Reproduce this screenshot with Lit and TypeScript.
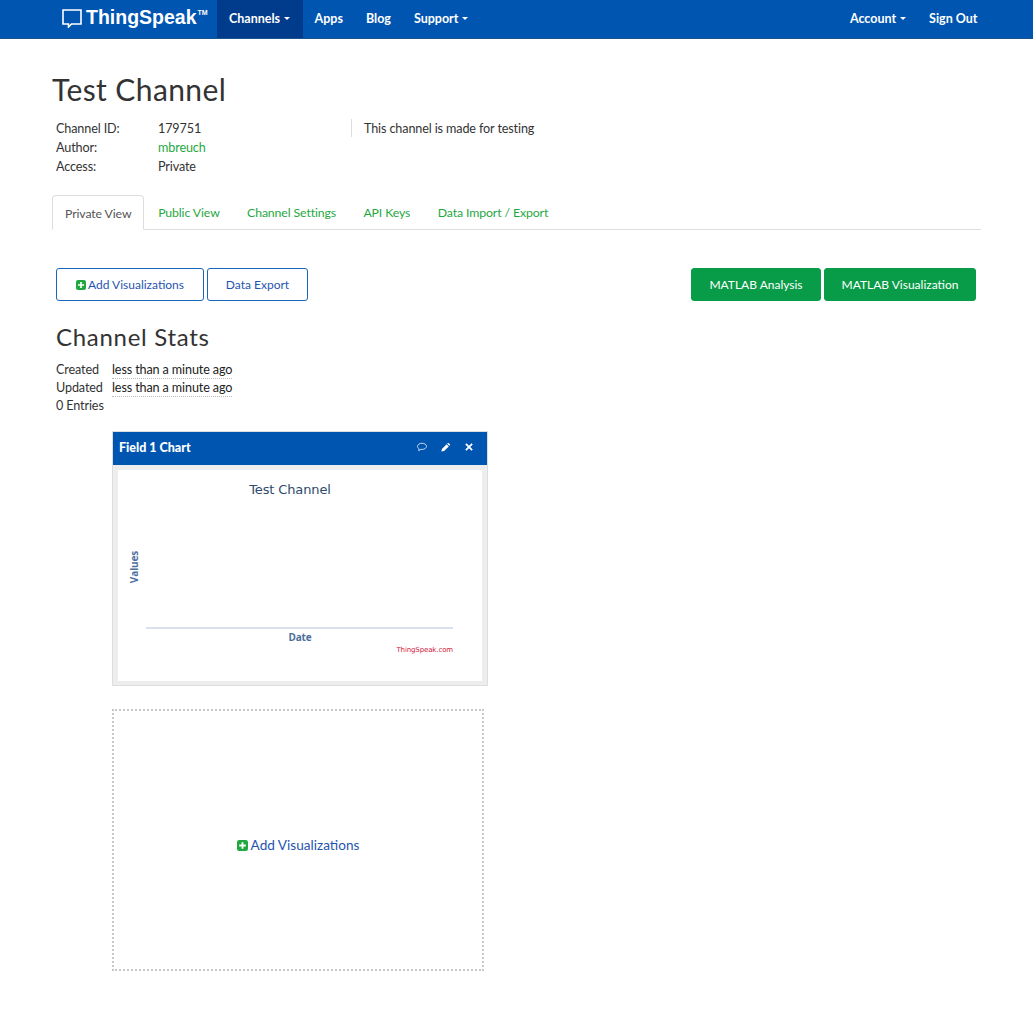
import { LitElement, css, html, svg } from "lit";
import { customElement } from "lit/decorators.js";

const plusSquare = html`<svg class="plus" viewBox="0 0 12 12">
  <rect width="12" height="12" rx="2.4" fill="#1fa83f"></rect>
  <path d="M5 2.4h2V5h2.6v2H7v2.6H5V7H2.4V5H5z" fill="#fff"></path>
</svg>`;

const tabs = ["Public View", "Channel Settings", "API Keys", "Data Import / Export"];

@customElement("app-root")
export class AppRoot extends LitElement {
  static styles = css`
    :host {
      display: block;
      min-height: 1024px;
      background: #fff;
      color: #333;
      font-family: Lato, "Open Sans", sans-serif;
      font-size: 12.6px;
      letter-spacing: -0.12px;
    }
    a {
      color: inherit;
      text-decoration: none;
    }
    .nav {
      display: flex;
      justify-content: space-between;
      height: 38px;
      padding: 0 44px 0 62px;
      background: #0055b1;
      border-bottom: 1px solid #17528f;
      color: #fff;
      font-family: Lato, sans-serif;
      font-size: 12.5px;
      font-weight: 700;
      letter-spacing: 0;
    }
    .nav-left,
    .nav-right {
      display: flex;
      align-items: stretch;
    }
    .logo {
      display: flex;
      align-items: center;
      gap: 4px;
      width: 155px;
      padding-bottom: 3px;
      box-sizing: border-box;
      font-family: "Liberation Sans", Arial, sans-serif;
      font-size: 19.5px;
    }
    .logo svg {
      width: 20px;
      height: 20px;
    }
    .logo sup {
      align-self: flex-start;
      margin: 9px 0 0 -3px;
      font-size: 7px;
      line-height: 1;
    }
    .nav a.item {
      display: flex;
      align-items: center;
      gap: 4px;
      padding: 0 11.5px 2px;
    }
    .nav a.active {
      background: #003b8c;
      padding: 0 13px 2px 12px;
    }
    .caret {
      width: 0;
      height: 0;
      border-left: 3px solid transparent;
      border-right: 3px solid transparent;
      border-top: 3px solid #fff;
    }
    .page {
      display: flex;
      flex-direction: column;
      padding: 0 52px;
    }
    h1 {
      margin: 32px 0 0;
      font-family: Lato, sans-serif;
      font-size: 30px;
      font-weight: 400;
      line-height: 36px;
      letter-spacing: 0.4px;
    }
    .meta {
      display: flex;
      margin: 12px 0 0 4px;
      line-height: 19px;
    }
    .meta-table {
      display: grid;
      grid-template-columns: 102px 193px;
      height: 57px;
    }
    .green {
      color: #1fa83f;
    }
    .desc {
      align-self: flex-start;
      height: 18px;
      padding-left: 12px;
      border-left: 1px solid #ddd;
    }
    .tabs {
      display: flex;
      height: 34px;
      margin-top: 19px;
      border-bottom: 1px solid #ddd;
      font-size: 12.3px;
    }
    .tabs a {
      display: flex;
      align-items: center;
      padding: 1px 13.7px 0;
      color: #1fa83f;
    }
    .tabs a.current {
      align-self: flex-start;
      height: 35px;
      padding: 1px 12px 0;
      background: #fff;
      border: 1px solid #ddd;
      border-bottom-color: #fff;
      border-radius: 4px 4px 0 0;
      color: #555;
      box-sizing: border-box;
    }
    .actions {
      display: flex;
      justify-content: space-between;
      margin: 38px 5px 0 4px;
    }
    .group {
      display: flex;
      gap: 3px;
    }
    .btn {
      display: flex;
      align-items: center;
      justify-content: center;
      gap: 2px;
      height: 33px;
      box-sizing: border-box;
      border: 1px solid #1a66b8;
      border-radius: 3px;
      color: #1f55b0;
      font-family: Lato, sans-serif;
      font-size: 12px;
      letter-spacing: 0;
    }
    .btn.add {
      width: 148px;
    }
    .btn.export {
      width: 101px;
    }
    .btn.solid {
      border-color: #089b48;
      background: #089b48;
      color: #fff;
    }
    .btn.analysis {
      width: 130px;
    }
    .btn.vis {
      width: 152px;
    }
    .plus {
      width: 10px;
      height: 10px;
      flex: none;
    }
    h2 {
      margin: 21px 0 0 4px;
      font-family: Lato, sans-serif;
      font-size: 24px;
      font-weight: 400;
      line-height: 30px;
      letter-spacing: 0.7px;
    }
    .stats {
      display: grid;
      grid-template-columns: 56px max-content;
      margin: 9px 0 0 4px;
      line-height: 18px;
    }
    .stats .when {
      color: #222;
      border-bottom: 1px dotted #bbb;
      height: 17px;
      line-height: 17px;
    }
    .chart {
      box-sizing: border-box;
      width: 376px;
      height: 255px;
      margin: 16px 0 0 60px;
      background: #ededed;
      border: 1px solid #ddd;
    }
    .chart-head {
      display: flex;
      align-items: center;
      justify-content: space-between;
      height: 33px;
      padding: 0 13px 3px 6px;
      box-sizing: border-box;
      background: #0055b1;
      color: #fff;
      font-family: Lato, sans-serif;
      font-size: 12.5px;
      font-weight: 900;
      letter-spacing: 0;
    }
    .chart-tools {
      display: flex;
      gap: 13.5px;
    }
    .chart-tools svg {
      display: block;
      width: 10px;
      height: 10px;
    }
    .chart-body {
      display: block;
      width: 364px;
      height: 211px;
      margin: 5px 0 0 5px;
      background: #fff;
    }
    .chart-body text {
      font-family: "DejaVu Sans", sans-serif;
    }
    .chart-body text.axis {
      font-family: "Open Sans", sans-serif;
      font-size: 10px;
      font-weight: 700;
      fill: #4d6f9b;
    }
    .slot {
      display: flex;
      align-items: center;
      justify-content: center;
      gap: 3px;
      box-sizing: border-box;
      width: 372px;
      height: 262px;
      margin: 23px 0 53px 60px;
      padding-top: 10px;
      border: 2px dotted #c8c8c8;
      color: #1f55b0;
      font-family: Lato, sans-serif;
      font-size: 13.6px;
      letter-spacing: 0;
    }
    .slot .plus {
      width: 11px;
      height: 11px;
    }
  `;

  render() {
    return html`
      <nav class="nav">
        <div class="nav-left">
          <a class="logo" href="#">
            <svg viewBox="0 0 20 20" fill="none" stroke="#fff" stroke-width="1.6">
              <path d="M1 2h18v14H9.5L6.5 19v-3H1z"></path>
            </svg>
            ThingSpeak<sup>TM</sup>
          </a>
          <a class="item active" href="#">Channels <span class="caret"></span></a>
          <a class="item" href="#">Apps</a>
          <a class="item" href="#">Blog</a>
          <a class="item" href="#">Support <span class="caret"></span></a>
        </div>
        <div class="nav-right">
          <a class="item" href="#">Account <span class="caret"></span></a>
          <a class="item" href="#">Sign Out</a>
        </div>
      </nav>

      <main class="page">
        <h1>Test Channel</h1>
        <div class="meta">
          <div class="meta-table">
            <span>Channel ID:</span><span>179751</span>
            <span>Author:</span><a class="green" href="#">mbreuch</a>
            <span>Access:</span><span>Private</span>
          </div>
          <div class="desc">This channel is made for testing</div>
        </div>

        <div class="tabs">
          <a class="current" href="#">Private View</a>
          ${tabs.map((t) => html`<a href="#">${t}</a>`)}
        </div>

        <div class="actions">
          <div class="group">
            <a class="btn add" href="#">${plusSquare} Add Visualizations</a>
            <a class="btn export" href="#">Data Export</a>
          </div>
          <div class="group">
            <a class="btn solid analysis" href="#">MATLAB Analysis</a>
            <a class="btn solid vis" href="#">MATLAB Visualization</a>
          </div>
        </div>

        <h2>Channel Stats</h2>
        <div class="stats">
          <span>Created</span><span class="when">less than a minute ago</span>
          <span>Updated</span><span class="when">less than a minute ago</span>
          <span>0 Entries</span>
        </div>

        <section class="chart">
          <div class="chart-head">
            <span>Field 1 Chart</span>
            <div class="chart-tools">
              <svg viewBox="0 0 12 12" fill="none" stroke="#fff" stroke-width="0.9">
                <path d="M6 1.5c3 0 5.4 1.6 5.4 3.7S9 8.9 6 8.9c-.5 0-1 0-1.400-.1L2 10.500l.6-2.300C1.300 7.500.6 6.400.6 5.200.6 3.100 3 1.500 6 1.500z"></path>
              </svg>
              <svg viewBox="0 0 12 12" fill="#fff">
                <path d="M8.600.8l2.600 2.600-1.200 1.200-2.600-2.600zM6.700 2.700l2.600 2.600-5.600 5.600L.5 11.500l.6-3.200z"></path>
              </svg>
              <svg viewBox="0 0 12 12" fill="#fff">
                <path d="M3 1.500L6 4.500l3-3L10.500 3l-3 3 3 3L9 10.500l-3-3-3 3L1.500 9l3-3-3-3z"></path>
              </svg>
            </div>
          </div>
          ${this.renderPlot()}
        </section>

        <section class="slot">${plusSquare} Add Visualizations</section>
      </main>
    `;
  }

  renderPlot() {
    return svg`<svg class="chart-body" viewBox="0 0 364 211">
      <text x="172" y="24" text-anchor="middle" font-size="13" fill="#2f4a6b">Test Channel</text>
      <text class="axis" transform="translate(20 97) rotate(-90)" text-anchor="middle">Values</text>
      <line x1="28" x2="335" y1="158" y2="158" stroke="#ccd8e6" stroke-width="1.500"></line>
      <text class="axis" x="182" y="171" text-anchor="middle">Date</text>
      <text x="335" y="182" text-anchor="end" font-size="7" fill="#d3203c">ThingSpeak.com</text>
    </svg>`;
  }
}
